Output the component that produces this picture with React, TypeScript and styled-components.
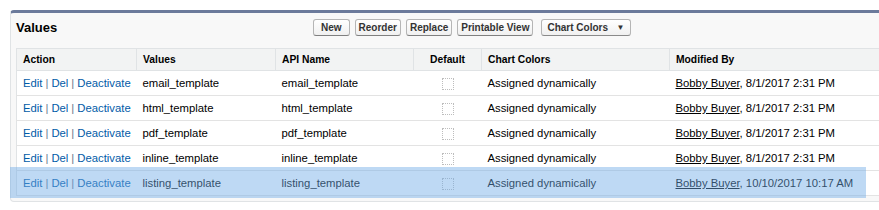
import React from "react";
import styled, { createGlobalStyle } from "styled-components";

const Global = createGlobalStyle`
  html, body { margin: 0; padding: 0; background: #fff; overflow: hidden; }
  body { font-family: "Liberation Sans", Arial, Helvetica, sans-serif; color: #000; }
`;

const Panel = styled.div`
  margin: 10px 0 0 10px;
  width: 880px;
  box-sizing: border-box;
  background: #f8f8f8;
  border: 1px solid #e0e3e5;
  border-top: 3px solid #6b7a9b;
  border-radius: 4px;
  padding: 0 5px 5px 5px;
`;

const PanelHeader = styled.div`
  display: flex;
  align-items: center;
  padding: 6px 0 12px 0;
`;

const Title = styled.h3`
  margin: 0;
  width: 297px;
  flex: none;
  font-size: 13px;
  line-height: 17px;
  font-weight: bold;
  color: #000;
`;

const ButtonBar = styled.div`
  display: flex;
  align-items: center;
  gap: 5px;
`;

const Btn = styled.button<{ $px?: number }>`
  height: 17px;
  box-sizing: border-box;
  padding: 0 ${(p) => p.$px ?? 3}px;
  font-family: "Liberation Sans", Arial, sans-serif;
  font-size: 10px;
  font-weight: bold;
  color: #333;
  line-height: 15px;
  border: 1px solid #b5b5b5;
  border-bottom-color: #7f7f7f;
  border-radius: 3px;
  background: linear-gradient(#ffffff, #f0f0f0);
  cursor: pointer;
`;

const Select = styled.div`
  margin-left: 3px;
  height: 17px;
  width: 90px;
  box-sizing: border-box;
  display: flex;
  align-items: center;
  justify-content: space-between;
  padding: 0 6px 0 5px;
  font-size: 10px;
  font-weight: bold;
  color: #333;
  border: 1px solid #b5b5b5;
  border-bottom-color: #8a8a8a;
  border-radius: 3px;
  background: linear-gradient(#ffffff, #f0f0f0);
`;

const Arrow = styled.span`
  font-size: 8px;
  color: #333;
`;

const TableWrap = styled.div`
  position: relative;
`;

const Table = styled.table`
  width: 100%;
  table-layout: fixed;
  border-collapse: collapse;
  background: #fff;
  border: 1px solid #e0e3e5;
`;

const Th = styled.th<{ $center?: boolean }>`
  height: 21px;
  padding: 0 6px;
  background: #f2f3f3;
  border-right: 1px solid #e0e3e5;
  border-bottom: 1px solid #e0e3e5;
  font-size: 10.3px;
  font-weight: bold;
  color: #000;
  text-align: ${(p) => (p.$center ? "center" : "left")};
  white-space: nowrap;
`;

const Td = styled.td<{ $center?: boolean }>`
  height: 24px;
  padding: 0 6px;
  border-bottom: 1px solid #e3e3e3;
  font-size: 11.3px;
  color: #000;
  vertical-align: middle;
  white-space: nowrap;
  text-align: ${(p) => (p.$center ? "center" : "left")};
`;

const ActionLink = styled.a`
  color: #015ba7;
  text-decoration: none;
`;

const Sep = styled.span`
  color: #6a7a8e;
  margin: 0 3px;
`;

const UserLink = styled.a`
  color: #000;
  text-decoration: underline;
`;

const Check = styled.span`
  display: inline-block;
  width: 12px;
  height: 12px;
  box-sizing: border-box;
  border: 1px dotted #bdbdbd;
  vertical-align: middle;
`;

const Highlight = styled.div`
  position: absolute;
  left: -6px;
  bottom: -2px;
  width: 856px;
  height: 31px;
  background: rgba(110, 170, 230, 0.45);
  pointer-events: none;
`;

const rows = [
  { v: "email_template", date: "8/1/2017 2:31 PM" },
  { v: "html_template", date: "8/1/2017 2:31 PM" },
  { v: "pdf_template", date: "8/1/2017 2:31 PM" },
  { v: "inline_template", date: "8/1/2017 2:31 PM" },
  { v: "listing_template", date: "10/10/2017 10:17 AM" },
];

export default function App() {
  return (
    <>
      <Global />
      <Panel>
        <PanelHeader>
          <Title>Values</Title>
          <ButtonBar>
            <Btn $px={7}>New</Btn>
            <Btn>Reorder</Btn>
            <Btn>Replace</Btn>
            <Btn>Printable View</Btn>
            <Select>
              <span>Chart Colors</span>
              <Arrow>▼</Arrow>
            </Select>
          </ButtonBar>
        </PanelHeader>
        <TableWrap>
          <Table>
            <colgroup>
              <col style={{ width: 120 }} />
              <col style={{ width: 139 }} />
              <col style={{ width: 138 }} />
              <col style={{ width: 68 }} />
              <col style={{ width: 188 }} />
              <col />
            </colgroup>
            <thead>
              <tr>
                <Th>Action</Th>
                <Th>Values</Th>
                <Th>API Name</Th>
                <Th $center>Default</Th>
                <Th>Chart Colors</Th>
                <Th>Modified By</Th>
              </tr>
            </thead>
            <tbody>
              {rows.map((r) => (
                <tr key={r.v}>
                  <Td>
                    <ActionLink href="#">Edit</ActionLink>
                    <Sep>|</Sep>
                    <ActionLink href="#">Del</ActionLink>
                    <Sep>|</Sep>
                    <ActionLink href="#">Deactivate</ActionLink>
                  </Td>
                  <Td>{r.v}</Td>
                  <Td>{r.v}</Td>
                  <Td $center>
                    <Check />
                  </Td>
                  <Td>Assigned dynamically</Td>
                  <Td>
                    <UserLink href="#">Bobby Buyer</UserLink>, {r.date}
                  </Td>
                </tr>
              ))}
            </tbody>
          </Table>
          <Highlight />
        </TableWrap>
      </Panel>
    </>
  );
}
